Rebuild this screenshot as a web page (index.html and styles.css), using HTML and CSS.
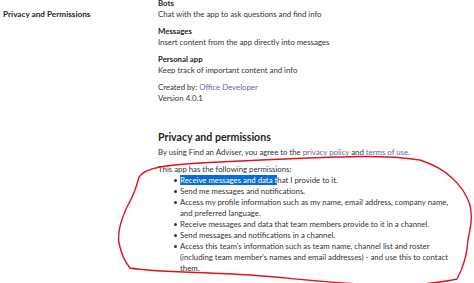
FILE: index.html
```html
<!DOCTYPE html>
<html>
<head>
<meta charset="utf-8">
<link rel="stylesheet" href="styles.css">
</head>
<body>
<div class="page">
  <div class="side">Privacy and Permissions</div>
  <div class="main">
    <div class="cap"><div class="cap-title">Bots</div><div>Chat with the app to ask questions and find info</div></div>
    <div class="cap"><div class="cap-title">Messages</div><div>Insert content from the app directly into messages</div></div>
    <div class="cap"><div class="cap-title">Personal app</div><div>Keep track of important content and info</div></div>
    <div class="meta">
      <div>Created by: <span class="link">Office Developer</span></div>
      <div>Version 4.0.1</div>
    </div>
    <h2 class="heading">Privacy and permissions</h2>
    <p class="agree">By using Find an Adviser, you agree to the <span class="link">privacy policy</span> and <span class="link">terms of use</span>.</p>
    <p class="perm-intro">This app has the following permissions:</p>
    <ul class="perms">
      <li><span><span class="sel">Receive messages and data t</span>hat I provide to it.</span></li>
      <li><span>Send me messages and notifications.</span></li>
      <li><span>Access my profile information such as my name, email address, company name, and preferred language.</span></li>
      <li><span>Receive messages and data that team members provide to it in a channel.</span></li>
      <li><span>Send messages and notifications in a channel.</span></li>
      <li><span>Access this team's information such as team name, channel list and roster (including team member's names and email addresses) - and use this to contact them.</span></li>
    </ul>
  </div>
</div>
<svg class="scribble" width="474" height="283" viewBox="0 0 474 283">
  <path d="M160 167 C150 169 142 172 139 177 C137 185 134 195 127 207 C121 220 117 232 119 243 C121 253 125 262 130 268 C150 272 200 272 250 275 C290 278 320 282 360 284 M400 286 C425 284 445 282 457 279 C463 268 467 255 468 240 C470 228 473 220 470 205 C466 193 460 185 452 178 C444 170 435 165 420 160 C400 157 370 156 340 157 C300 158 240 161 200 163 C185 164 170 165 160 167" fill="none" stroke="#e0141e" stroke-width="1.4" stroke-linecap="round"/>
</svg>
</body>
</html>
```
FILE: styles.css
```css
html, body { margin: 0; padding: 0; background: #fff; }
body {
  font-family: "Lato", "Open Sans", sans-serif;
  font-size: 7.8px;
  line-height: 11px;
  color: #333;
  width: 474px;
  height: 283px;
  overflow: hidden;
  position: relative;
}
.page {
  display: flex;
  margin-top: -2px;
}
.side {
  width: 158px;
  padding: 11px 0 0 3px;
  box-sizing: border-box;
  font-size: 8.2px;
  font-weight: bold;
  color: #252423;
  flex: none;
}
.main {
  width: 294px;
  flex: none;
}
.cap { margin-bottom: 6px; }
.cap-title { font-weight: bold; color: #252423; }
.meta { margin-bottom: 25px; }
.link { color: #6264a7; }
.heading {
  font-size: 10.6px;
  line-height: 16px;
  margin: 0 0 2px;
  color: #252423;
}
.agree { margin: 0 0 6px; }
.perm-intro { margin: 0; }
.perms { margin: 0; padding-left: 16px; list-style: none; }
.perms li { display: flex; align-items: flex-start; }
.perms li::before {
  content: "";
  flex: none;
  width: 3px;
  height: 3px;
  border-radius: 50%;
  background: #333;
  margin: 4px 3px 0 0;
}
.sel { background: #0a6ed1; color: #fff; }
.scribble { position: absolute; left: 0; top: 0; pointer-events: none; }
```
